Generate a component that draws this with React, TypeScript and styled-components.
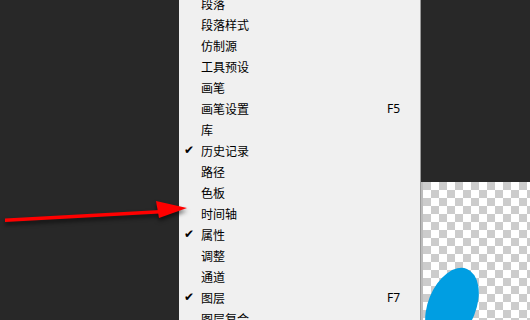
import React from "react";
import styled, { createGlobalStyle } from "styled-components";

const Global = createGlobalStyle`
  html, body { margin: 0; padding: 0; width: 530px; height: 320px; overflow: hidden; background: #282828; }
  #root { width: 530px; height: 320px; }
`;

const Page = styled.div`
  position: relative;
  display: flex;
  width: 530px;
  height: 320px;
  overflow: hidden;
  background: #282828;
  font-family: "Noto Sans CJK SC", "Noto Sans", sans-serif;
`;

const LeftArea = styled.div`
  width: 179px;
  flex: none;
  background: #282828;
`;

const Menu = styled.div`
  width: 241px;
  flex: none;
  background: #f0f0f0;
  border-right: 1px solid #9a9a9a;
  display: flex;
  flex-direction: column;
  margin-top: -7px;
  height: 340px;
`;

const Row = styled.div`
  height: 21px;
  display: grid;
  grid-template-columns: 22px 1fr auto;
  align-items: center;
  padding-right: 20px;
  font-size: 12px;
  color: #000;
  line-height: 21px;
`;

const Check = styled.span`
  font-size: 12px;
  padding-left: 5px;
  font-family: "DejaVu Sans", sans-serif;
`;

const Label = styled.span`
  padding-left: 0px;
`;

const Shortcut = styled.span`
  font-family: "Noto Sans", "Liberation Sans", sans-serif;
  font-size: 12px;
`;

const RightArea = styled.div`
  flex: 1;
  display: flex;
  flex-direction: column;
`;

const DarkTop = styled.div`
  height: 182px;
  background: #282828;
`;

const Canvas = styled.div`
  position: relative;
  flex: 1;
  border-left: 2px solid #bdbdbd;
  background-color: #fff;
  background-image:
    linear-gradient(45deg, #cccccc 25%, transparent 25%, transparent 75%, #cccccc 75%),
    linear-gradient(45deg, #cccccc 25%, transparent 25%, transparent 75%, #cccccc 75%);
  background-size: 16px 16px;
  background-position: 8px 0, 16px 8px;
  overflow: hidden;
`;

const Blob = styled.svg`
  position: absolute;
  left: 0;
  top: 0;
`;

const Arrow = styled.svg`
  position: absolute;
  left: 0;
  top: 190px;
  filter: drop-shadow(0 3px 2px rgba(0,0,0,0.6));
`;

const items: { label: string; check?: boolean; key?: string }[] = [
  { label: "段落" },
  { label: "段落样式" },
  { label: "仿制源" },
  { label: "工具预设" },
  { label: "画笔" },
  { label: "画笔设置", key: "F5" },
  { label: "库" },
  { label: "历史记录", check: true },
  { label: "路径" },
  { label: "色板" },
  { label: "时间轴" },
  { label: "属性", check: true },
  { label: "调整" },
  { label: "通道" },
  { label: "图层", check: true, key: "F7" },
  { label: "图层复合" },
];

export default function App() {
  return (
    <Page>
      <Global />
      <LeftArea />
      <Menu>
        {items.map((it) => (
          <Row key={it.label}>
            <Check>{it.check ? "✔" : ""}</Check>
            <Label>{it.label}</Label>
            <Shortcut>{it.key ?? ""}</Shortcut>
          </Row>
        ))}
      </Menu>
      <RightArea>
        <DarkTop />
        <Canvas>
          <Blob width="106" height="138" viewBox="0 0 106 138">
            <ellipse cx="29" cy="124" rx="24" ry="40" transform="rotate(22 29 124)" fill="#009ee2" />
          </Blob>
        </Canvas>
      </RightArea>
      <Arrow width="200" height="40" viewBox="0 0 200 40">
        <polygon points="5,28.5 160,20 160,23.5 5,32" fill="#ff0000" />
        <polygon points="156,11 187,18 159,28" fill="#ff0000" />
      </Arrow>
    </Page>
  );
}
